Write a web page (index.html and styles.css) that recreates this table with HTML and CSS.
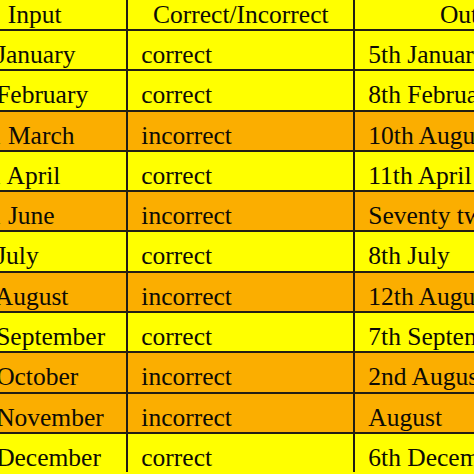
FILE: index.html
```html
<!DOCTYPE html>
<html>
<head>
<meta charset="utf-8">
<link rel="stylesheet" href="styles.css">
</head>
<body>
<div class="sheet">
  <div class="cell head y">Input</div>
  <div class="cell head y">Correct/Incorrect</div>
  <div class="cell head y">Output</div>

  <div class="cell in y">5 January</div>
  <div class="cell y">correct</div>
  <div class="cell y">5th January</div>

  <div class="cell in y">8 February</div>
  <div class="cell y">correct</div>
  <div class="cell y">8th February</div>

  <div class="cell in o">11 March</div>
  <div class="cell o">incorrect</div>
  <div class="cell o">10th August</div>

  <div class="cell in y">11 April</div>
  <div class="cell y">correct</div>
  <div class="cell y">11th April</div>

  <div class="cell in o">11 June</div>
  <div class="cell o">incorrect</div>
  <div class="cell o">Seventy two June</div>

  <div class="cell in y">8 July</div>
  <div class="cell y">correct</div>
  <div class="cell y">8th July</div>

  <div class="cell in o">2 August</div>
  <div class="cell o">incorrect</div>
  <div class="cell o">12th August</div>

  <div class="cell in y">7 September</div>
  <div class="cell y">correct</div>
  <div class="cell y">7th September</div>

  <div class="cell in o">2 October</div>
  <div class="cell o">incorrect</div>
  <div class="cell o">2nd August</div>

  <div class="cell in o">4 November</div>
  <div class="cell o">incorrect</div>
  <div class="cell o">August</div>

  <div class="cell in y">6 December</div>
  <div class="cell y">correct</div>
  <div class="cell y">6th December</div>
</div>
</body>
</html>
```
FILE: styles.css
```css
html, body {
  margin: 0;
  padding: 0;
  overflow: hidden;
  background: #ffff00;
}

.sheet {
  display: grid;
  grid-template-columns: 183.3px 225px 240px;
  grid-auto-rows: 38.3px;
  gap: 2px;
  background: #221e14;
  width: max-content;
  margin-left: -57px;
  margin-top: -9.3px;
  font-family: "Liberation Serif", "Times New Roman", serif;
  font-size: 25.5px;
  line-height: 28px;
  color: #0d0b05;
}

.cell {
  padding: 10px 0 0 13px;
  white-space: nowrap;
  overflow: hidden;
}

.cell.in {
  padding-left: 34px;
}

.cell.head {
  padding-left: 0;
  text-align: center;
}

.y {
  background: #ffff00;
}

.o {
  background: #fbae00;
}
```
